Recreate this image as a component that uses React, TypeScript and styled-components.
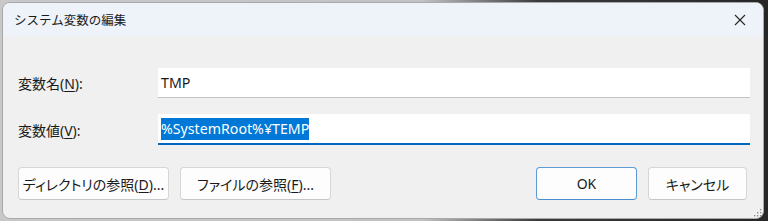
import React from 'react';
import styled, { createGlobalStyle } from 'styled-components';

const GlobalStyle = createGlobalStyle`
    html, body {
        margin: 0;
        padding: 0;
    }
    body {
        width: 768px;
        height: 221px;
        overflow: hidden;
        background: linear-gradient(90deg, #c8c8c8 0%, #c2c2c2 55%, #3a3a3a 70%, #262626 100%);
        font-family: "Noto Sans", "Noto Sans CJK JP", sans-serif;
    }
`;

const Window = styled.div`
    position: relative;
    box-sizing: border-box;
    width: 762px;
    height: 217px;
    margin: 2px 0 0 2px;
    background: #f0f0f0;
    border: 1px solid #a9a9a9;
    border-radius: 8px;
    overflow: hidden;
    display: flex;
    flex-direction: column;
`;

const TitleBar = styled.header`
    height: 33px;
    flex: none;
    display: flex;
    align-items: center;
    justify-content: space-between;
    padding: 0 0 0 11px;
    background: #eef2f9;
    color: #1a1a1a;
    font-size: 12.5px;
`;

const CloseButton = styled.button`
    width: 46px;
    height: 33px;
    border: none;
    background: transparent;
    display: flex;
    align-items: center;
    justify-content: center;
    padding: 0;
`;

const Body = styled.main`
    flex: 1;
    display: flex;
    flex-direction: column;
    padding: 32px 13px 0 14px;
`;

const Field = styled.div`
    display: flex;
    align-items: center;
    margin-bottom: 16px;
`;

const Label = styled.label`
    width: 140px;
    flex: none;
    font-size: 14px;
    color: #1a1a1a;
    padding-left: 1px;
`;

const Key = styled.span`
    text-decoration: underline;
    text-underline-offset: 2px;
`;

const Input = styled.div<{ $focused?: boolean }>`
    flex: 1;
    box-sizing: border-box;
    height: ${p => (p.$focused ? 31 : 30)}px;
    display: flex;
    align-items: center;
    padding: 0 3px;
    background: #ffffff;
    border-bottom: ${p => (p.$focused ? '2px solid #0067c0' : '1px solid #c4c4c4')};
    font-size: 14.2px;
    color: #1a1a1a;
`;

const Selection = styled.span`
    background: #0078d7;
    color: #ffffff;
    line-height: 20px;
    padding: 1px 0;
`;

const ButtonRow = styled.div`
    display: flex;
    align-items: center;
    gap: 11px;
    margin-top: 6px;
    padding: 0 3px 0 1px;
`;

const Spacer = styled.div`
    flex: 1;
`;

const Button = styled.button<{ $width: number; $primary?: boolean }>`
    box-sizing: border-box;
    width: ${p => p.$width}px;
    height: 33px;
    border-radius: 4px;
    background: #fdfdfd;
    border: 1px solid ${p => (p.$primary ? '#5e9ad6' : '#d6d6d6')};
    border-bottom-color: ${p => (p.$primary ? '#4a8ccf' : '#c6c6c6')};
    font-family: "Noto Sans", "Noto Sans CJK JP", sans-serif;
    font-feature-settings: "palt";
    font-size: 14px;
    white-space: nowrap;
    color: #1a1a1a;
    padding: 0;
`;

const Grip = styled.svg`
    position: absolute;
    right: 1px;
    bottom: 1px;
`;

const App = () => {
    return (
        <>
            <GlobalStyle />
            <Window>
                <TitleBar>
                    <span>システム変数の編集</span>
                    <CloseButton aria-label="閉じる">
                        <svg width="12" height="12" viewBox="0 0 12 12">
                            <path d="M1 1 L11 11 M11 1 L1 11" stroke="#262626" strokeWidth="1.1" />
                        </svg>
                    </CloseButton>
                </TitleBar>
                <Body>
                    <Field>
                        <Label>変数名(<Key>N</Key>):</Label>
                        <Input>TMP</Input>
                    </Field>
                    <Field>
                        <Label>変数値(<Key>V</Key>):</Label>
                        <Input $focused>
                            <Selection>%SystemRoot%¥TEMP</Selection>
                        </Input>
                    </Field>
                    <ButtonRow>
                        <Button $width={151}>ディレクトリの参照(<Key>D</Key>)...</Button>
                        <Button $width={151}>ファイルの参照(<Key>F</Key>)...</Button>
                        <Spacer />
                        <Button $width={101} $primary>OK</Button>
                        <Button $width={99}>キャンセル</Button>
                    </ButtonRow>
                </Body>
                <Grip width="8" height="8" viewBox="0 0 8 8">
                    <g fill="#8a8a8a">
                        <rect x="6" y="0" width="1.3" height="1.3" />
                        <rect x="3" y="3" width="1.3" height="1.3" />
                        <rect x="6" y="3" width="1.3" height="1.3" />
                        <rect x="0" y="6" width="1.3" height="1.3" />
                        <rect x="3" y="6" width="1.3" height="1.3" />
                        <rect x="6" y="6" width="1.3" height="1.3" />
                    </g>
                </Grip>
            </Window>
        </>
    );
};

export default App;
